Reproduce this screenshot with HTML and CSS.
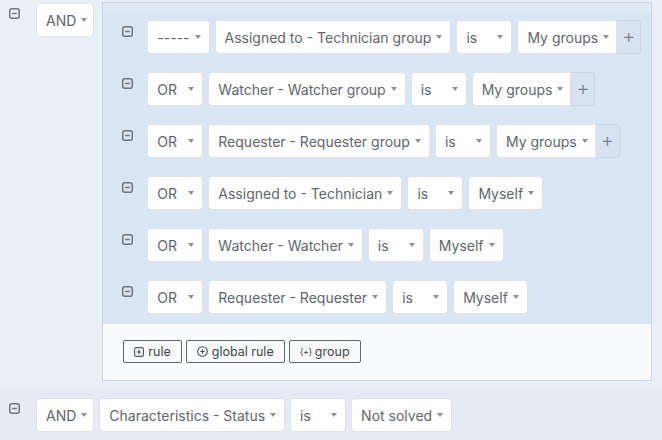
FILE: index.html
```html
<!DOCTYPE html>
<html>
<head>
<meta charset="utf-8">
<link rel="stylesheet" href="styles.css">
</head>
<body>
<div class="builder">
  <div class="row top">
    <span class="del"><svg width="11" height="11" viewBox="0 0 11 11"><rect x="0.75" y="0.75" width="9.5" height="9.5" rx="2" fill="none" stroke="#6f757c" stroke-width="1.5"/><line x1="3.2" y1="5.5" x2="7.8" y2="5.5" stroke="#6f757c" stroke-width="1.5"/></svg></span>
    <div class="sel cond">AND<i class="caret"></i></div>
    <div class="group">
      <div class="group-head"></div>
      <div class="group-body">
        <div class="rule">
          <span class="del"><svg width="11" height="11" viewBox="0 0 11 11"><rect x="0.75" y="0.75" width="9.5" height="9.5" rx="2" fill="none" stroke="#6f757c" stroke-width="1.5"/><line x1="3.2" y1="5.5" x2="7.8" y2="5.5" stroke="#6f757c" stroke-width="1.5"/></svg></span>
          <div class="sel">-----<i class="caret"></i></div>
          <div class="sel">Assigned to - Technician group<i class="caret"></i></div>
          <div class="sel">is<i class="caret"></i></div>
          <div class="combo"><div class="sel joined">My groups<i class="caret"></i></div><span class="plus">+</span></div>
        </div>
        <div class="rule">
          <span class="del"><svg width="11" height="11" viewBox="0 0 11 11"><rect x="0.75" y="0.75" width="9.5" height="9.5" rx="2" fill="none" stroke="#6f757c" stroke-width="1.5"/><line x1="3.2" y1="5.5" x2="7.8" y2="5.5" stroke="#6f757c" stroke-width="1.5"/></svg></span>
          <div class="sel">OR<i class="caret"></i></div>
          <div class="sel">Watcher - Watcher group<i class="caret"></i></div>
          <div class="sel">is<i class="caret"></i></div>
          <div class="combo"><div class="sel joined">My groups<i class="caret"></i></div><span class="plus">+</span></div>
        </div>
        <div class="rule">
          <span class="del"><svg width="11" height="11" viewBox="0 0 11 11"><rect x="0.75" y="0.75" width="9.5" height="9.5" rx="2" fill="none" stroke="#6f757c" stroke-width="1.5"/><line x1="3.2" y1="5.5" x2="7.8" y2="5.5" stroke="#6f757c" stroke-width="1.5"/></svg></span>
          <div class="sel">OR<i class="caret"></i></div>
          <div class="sel">Requester - Requester group<i class="caret"></i></div>
          <div class="sel">is<i class="caret"></i></div>
          <div class="combo"><div class="sel joined">My groups<i class="caret"></i></div><span class="plus">+</span></div>
        </div>
        <div class="rule">
          <span class="del"><svg width="11" height="11" viewBox="0 0 11 11"><rect x="0.75" y="0.75" width="9.5" height="9.5" rx="2" fill="none" stroke="#6f757c" stroke-width="1.5"/><line x1="3.2" y1="5.5" x2="7.8" y2="5.5" stroke="#6f757c" stroke-width="1.5"/></svg></span>
          <div class="sel">OR<i class="caret"></i></div>
          <div class="sel">Assigned to - Technician<i class="caret"></i></div>
          <div class="sel">is<i class="caret"></i></div>
          <div class="sel">Myself<i class="caret"></i></div>
        </div>
        <div class="rule">
          <span class="del"><svg width="11" height="11" viewBox="0 0 11 11"><rect x="0.75" y="0.75" width="9.5" height="9.5" rx="2" fill="none" stroke="#6f757c" stroke-width="1.5"/><line x1="3.2" y1="5.5" x2="7.8" y2="5.5" stroke="#6f757c" stroke-width="1.5"/></svg></span>
          <div class="sel">OR<i class="caret"></i></div>
          <div class="sel">Watcher - Watcher<i class="caret"></i></div>
          <div class="sel">is<i class="caret"></i></div>
          <div class="sel">Myself<i class="caret"></i></div>
        </div>
        <div class="rule">
          <span class="del"><svg width="11" height="11" viewBox="0 0 11 11"><rect x="0.75" y="0.75" width="9.5" height="9.5" rx="2" fill="none" stroke="#6f757c" stroke-width="1.5"/><line x1="3.2" y1="5.5" x2="7.8" y2="5.5" stroke="#6f757c" stroke-width="1.5"/></svg></span>
          <div class="sel">OR<i class="caret"></i></div>
          <div class="sel">Requester - Requester<i class="caret"></i></div>
          <div class="sel">is<i class="caret"></i></div>
          <div class="sel">Myself<i class="caret"></i></div>
        </div>
      </div>
      <div class="group-foot">
        <span class="btn"><svg width="10" height="10" viewBox="0 0 10 10"><rect x="0.6" y="0.6" width="8.8" height="8.8" rx="1.5" fill="none" stroke="#4b525a" stroke-width="1.1"/><path d="M5 2.8v4.4M2.8 5h4.4" stroke="#4b525a" stroke-width="1.1"/></svg>rule</span>
        <span class="btn"><svg width="11" height="11" viewBox="0 0 11 11"><circle cx="5.5" cy="5.5" r="4.8" fill="none" stroke="#4b525a" stroke-width="1.1"/><path d="M5.5 3.2v4.6M3.2 5.5h4.6" stroke="#4b525a" stroke-width="1.1"/></svg>global rule</span>
        <span class="btn"><span class="braces">{+}</span>group</span>
      </div>
    </div>
  </div>
  <div class="row bottom">
    <span class="del"><svg width="11" height="11" viewBox="0 0 11 11"><rect x="0.75" y="0.75" width="9.5" height="9.5" rx="2" fill="none" stroke="#6f757c" stroke-width="1.5"/><line x1="3.2" y1="5.5" x2="7.8" y2="5.5" stroke="#6f757c" stroke-width="1.5"/></svg></span>
    <div class="sel cond">AND<i class="caret"></i></div>
    <div class="sel">Characteristics - Status<i class="caret"></i></div>
    <div class="sel">is<i class="caret"></i></div>
    <div class="sel">Not solved<i class="caret"></i></div>
  </div>
</div>
</body>
</html>
```

FILE: styles.css
```css
* { box-sizing: border-box; }
html, body { margin: 0; padding: 0; }
body {
  width: 662px;
  height: 440px;
  overflow: hidden;
  font-family: Inter, "Noto Sans", sans-serif;
  font-size: 14px;
  color: #61666d;
  background: #e4ebf5;
}
.builder { display: flex; flex-direction: column; }
.row { display: flex; align-items: flex-start; }
.row.top {
  background: #e9eff7;
  padding: 2px 10px 8px 9px;
}
.row.top > .del { margin-top: 6px; margin-right: 16px; }
.row.top > .cond { margin-top: 1px; margin-right: 8px; }
.row.bottom {
  background: #e4ebf5;
  padding: 9px 10px 8px 9px;
  gap: 5px;
}
.row.bottom > .del { margin-top: 5px; margin-right: 11px; }
.del { display: block; width: 11px; height: 11px; flex: none; }
.del svg { display: block; }
.sel {
  height: 34px;
  min-width: 56px;
  flex: none;
  display: flex;
  align-items: center;
  justify-content: space-between;
  padding: 0 8px 0 9px;
  background: #fff;
  border: 1px solid #dde3eb;
  border-radius: 4px;
  white-space: nowrap;
}
.sel.cond { padding-right: 6px; }
.caret {
  display: block;
  width: 0; height: 0;
  margin-left: 5px;
  border-left: 3.5px solid transparent;
  border-right: 3.5px solid transparent;
  border-top: 4.5px solid #8b9198;
}
.group {
  flex: 1;
  border: 1px solid #cdd7e4;
  background: #d9e5f2;
}
.group-head { height: 8px; background: #e0e8f3; }
.group-body {
  display: flex;
  flex-direction: column;
  gap: 18px;
  padding: 9px 0 10px 19px;
}
.rule { display: flex; align-items: flex-start; gap: 5px; }
.rule > .del { margin-top: 6px; margin-right: 9px; }
.combo { display: flex; }
.sel.joined { border-radius: 4px 0 0 4px; padding-right: 7px; }
.plus {
  width: 24px;
  height: 34px;
  display: flex;
  align-items: center;
  justify-content: center;
  border: 1px solid #ccd7e4;
  border-left: none;
  border-radius: 0 4px 4px 0;
  background: #d8e3f1;
  color: #7a8189;
  font-size: 20px;
  font-weight: 300;
  padding-bottom: 2px;
}
.group-foot {
  background: #f8fafc;
  padding: 16px 20px 17px 20px;
  display: flex;
  gap: 4px;
}
.btn {
  height: 23px;
  display: flex;
  align-items: center;
  gap: 4px;
  padding: 0 10px 0 10px;
  border: 1px solid #5e666f;
  border-radius: 2px;
  font-size: 12.5px;
  color: #3f464e;
}
.btn svg { display: block; }
.braces { font-size: 9px; letter-spacing: -0.5px; margin-right: -1px; }
```
